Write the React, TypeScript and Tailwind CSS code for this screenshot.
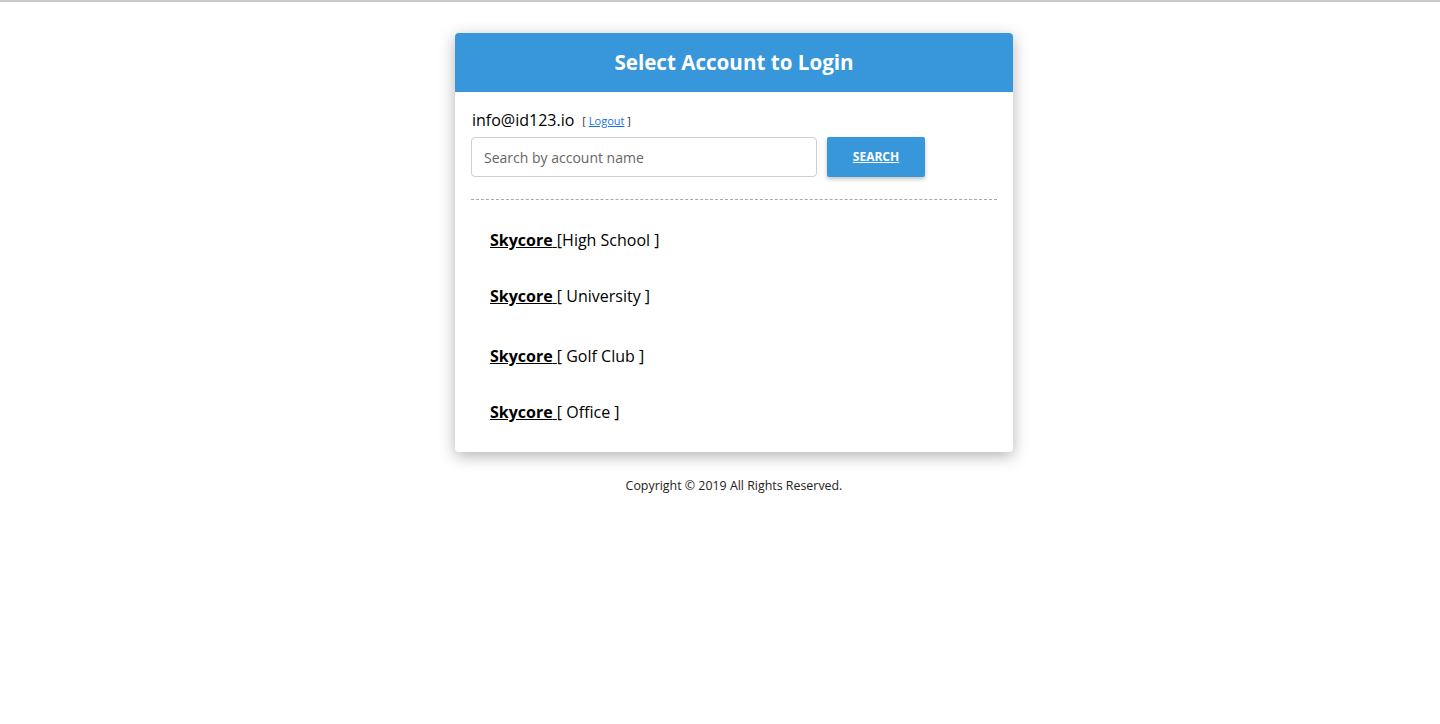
import React from 'react'

const accounts = [
  { name: 'Skycore', label: '[High School ]', gap: 'mt-[29px]' },
  { name: 'Skycore', label: '[ University ]', gap: 'mt-[34px]' },
  { name: 'Skycore', label: '[ Golf Club ]', gap: 'mt-[38px]' },
  { name: 'Skycore', label: '[ Office ]', gap: 'mt-[34px]' },
]

export default function App() {
  return (
    <div className="min-h-screen bg-white font-['Open_Sans',sans-serif] text-black">
      <div className="h-[2px] bg-[#c9c9c9]" />
      <div className="flex flex-col items-center pl-[28px] pt-[31px]">
        <div className="w-[558px] rounded-[4px] bg-white shadow-[0_4px_16px_rgba(0,0,0,0.3)]">
          <div className="flex h-[59px] items-center justify-center rounded-t-[4px] bg-[#3897da]">
            <h1 className="text-[20.6px] font-bold text-white">Select Account to Login</h1>
          </div>
          <div className="px-4 pt-[17px] pb-[29px]">
            <div className="flex items-center pl-[1px]">
              <span className="text-[16px] leading-[22px]">info@id123.io</span>
              <span className="ml-[8px] mt-[2px] text-[11px] text-[#333]">
                [ <a href="#" className="text-[#1a6fe0] underline">Logout</a> ]
              </span>
            </div>
            <div className="mt-[6px] flex items-start gap-[10px]">
              <input
                type="text"
                placeholder="Search by account name"
                className="h-[40px] w-[346px] rounded-[4px] border border-[#cfcfcf] px-3 text-[14px] text-[#333] placeholder:text-[#666] outline-none"
              />
              <button
                type="button"
                className="h-[40px] w-[98px] rounded-[2px] bg-[#3897da] text-[12px] font-bold text-white underline shadow-[0_2px_4px_rgba(0,0,0,0.25)]"
              >
                SEARCH
              </button>
            </div>
            <div className="mt-[22px] border-t border-dashed border-[#a8a8a8]" />
            <div className="pl-[19px]">
              {accounts.map((a, i) => (
                <div key={i} className={`${a.gap} text-[16px] leading-[22px]`}>
                  <a href="#" className="font-bold text-black underline">{a.name} </a>
                  <span>{a.label}</span>
                </div>
              ))}
            </div>
          </div>
        </div>
        <p className="mt-[25px] text-[12.4px] text-[#222]">Copyright © 2019 All Rights Reserved.</p>
      </div>
    </div>
  )
}
